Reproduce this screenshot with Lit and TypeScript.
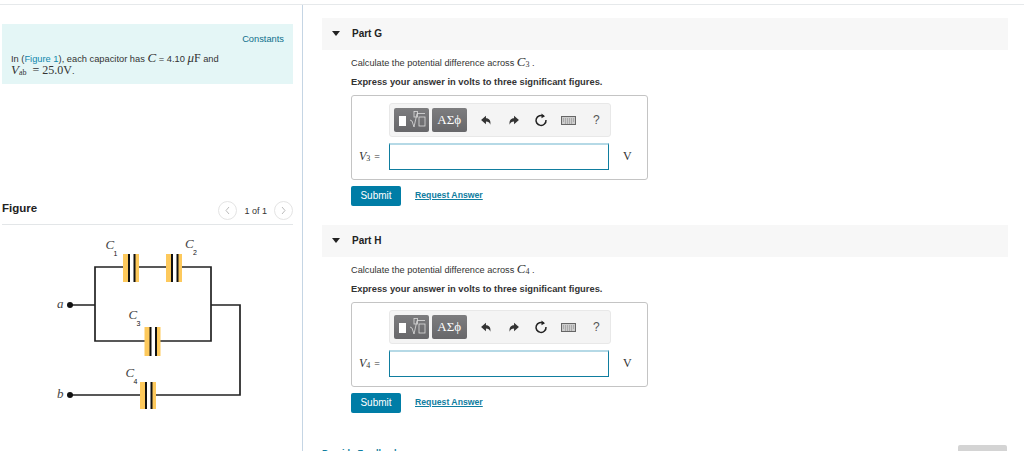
import { LitElement, html, css, svg } from "lit";
import { customElement, property } from "lit/decorators.js";

@customElement("answer-part")
class AnswerPart extends LitElement {
  @property() part = "";
  @property() cap = "";
  @property() volt = "";

  static styles = css`
    :host {
      display: block;
    }
    .head {
      height: 32px;
      box-sizing: border-box;
      padding-bottom: 2px;
      background: #f7f7f7;
      display: flex;
      align-items: center;
      font-weight: bold;
      font-size: 10px;
      color: #222;
    }
    .tri {
      width: 0;
      height: 0;
      margin: 0 12px 0 10px;
      border-left: 4px solid transparent;
      border-right: 4px solid transparent;
      border-top: 5px solid #222;
    }
    .body {
      padding: 0 0 0 29px;
    }
    .prompt {
      height: 14px;
      margin-top: 5px;
      line-height: 14px;
      font-size: 9.2px;
      color: #333;
    }
    .math {
      font-family: "Liberation Serif", serif;
      font-style: italic;
      font-size: 13px;
    }
    .math sub {
      font-style: normal;
      font-size: 8px;
      line-height: 0;
      vertical-align: -1px;
    }
    .express {
      margin-top: 6px;
      height: 14px;
      line-height: 14px;
      font-size: 9.33px;
      font-weight: bold;
      color: #333;
    }
    .box {
      margin-top: 6px;
      width: 297px;
      height: 85px;
      box-sizing: border-box;
      border: 1px solid #c4c4c4;
      border-radius: 3px;
      padding: 7px 0 0 37px;
    }
    .toolbar {
      width: 222px;
      height: 34px;
      box-sizing: border-box;
      background: #f4f4f4;
      border: 1px solid #e8e8e8;
      border-radius: 3px;
      display: flex;
      align-items: center;
      padding-left: 4px;
    }
    .tool {
      width: 35px;
      height: 24px;
      background: linear-gradient(#7d7d7f, #67676a);
      border-radius: 2px;
      display: flex;
      align-items: center;
      justify-content: center;
      margin-right: 3px;
      color: #fff;
    }
    .tool.sym {
      font-family: "Liberation Serif", "DejaVu Serif", serif;
      font-size: 13px;
    }
    .icons {
      display: flex;
      align-items: center;
      margin-left: 3px;
    }
    .icons span {
      width: 27.5px;
      display: flex;
      justify-content: center;
      color: #555;
      font-size: 12px;
    }
    .row {
      display: flex;
      align-items: center;
      margin-top: 6px;
      margin-left: -37px;
    }
    .label {
      width: 37px;
      box-sizing: border-box;
      padding-left: 7px;
      font-family: "Liberation Serif", serif;
      font-size: 10px;
      color: #333;
      white-space: nowrap;
    }
    .label i {
      font-size: 12px;
    }
    .label sub {
      font-size: 8px;
      line-height: 0;
      vertical-align: -1px;
      margin-right: 4px;
    }
    .field {
      width: 220px;
      height: 27px;
      box-sizing: border-box;
      border: 1px solid #0f7d9f;
      border-top: 2px solid #b5d9e6;
      background: #fff;
    }
    .unit {
      margin-left: 14px;
      font-family: "Liberation Serif", serif;
      font-size: 12px;
      color: #333;
    }
    .actions {
      display: flex;
      align-items: center;
      margin-top: 6px;
    }
    .submit {
      width: 50px;
      height: 20px;
      background: #007da6;
      border-radius: 2px;
      color: #fff;
      font-size: 10px;
      line-height: 20px;
      text-align: center;
    }
    .request {
      margin: 0 0 2px 14px;
      font-size: 8.7px;
      font-weight: bold;
      color: #0f7d9f;
      text-decoration: underline;
    }
  `;

  render() {
    return html`
      <div class="head"><span class="tri"></span>Part ${this.part}</div>
      <div class="body">
        <div class="prompt">
          Calculate the potential difference across
          <span class="math">C<sub>${this.cap}</sub></span> .
        </div>
        <div class="express">Express your answer in volts to three significant figures.</div>
        <div class="box">
          <div class="toolbar">
            <div class="tool">
              <svg width="35" height="24" viewBox="0 0 35 24">
                <rect x="5" y="8" width="7" height="10" fill="#fff" />
                <rect x="20" y="3.500" width="3.500" height="5.500" fill="none" stroke="#ddd" stroke-width=".8" />
                <path d="M16 12l2 1 2 6 3-13.500h8" fill="none" stroke="#ddd" stroke-width=".8" />
                <rect x="25" y="9" width="6" height="9" fill="none" stroke="#ddd" stroke-width=".8" />
              </svg>
            </div>
            <div class="tool sym">ΑΣϕ</div>
            <div class="icons">
              <span>
                <svg width="13" height="13" viewBox="0 0 12 12">
                  <path d="M5.500 1.500L1 5.500l4.500 4V7c2 0 3.500.6 4 3 .8-3.600-1-6-4-6z" fill="#333" />
                </svg>
              </span>
              <span>
                <svg width="13" height="13" viewBox="0 0 12 12">
                  <path d="M6.500 1.500l4.500 4-4.500 4V7c-2 0-3.500.6-4 3-.8-3.600 1-6 4-6z" fill="#333" />
                </svg>
              </span>
              <span>
                <svg width="14" height="14" viewBox="0 0 14 14">
                  <path d="M9.700 3.200A5 5 0 1 0 12 7" fill="none" stroke="#222" stroke-width="1.500" />
                  <path d="M7.500 0.500l3.500 2.800-3.500 2z" fill="#222" />
                </svg>
              </span>
              <span>
                <svg width="15" height="9" viewBox="0 0 15 9">
                  <rect x=".5" y=".5" width="14" height="8" fill="#ccc" stroke="#666" />
                  <path d="M2 3h11M2 5h11M4 7h7" stroke="#888" stroke-dasharray="1 1" />
                </svg>
              </span>
              <span>?</span>
            </div>
          </div>
          <div class="row">
            <div class="label"><i>V</i><sub>${this.cap}</sub>=</div>
            <div class="field"></div>
            <div class="unit">${this.volt}</div>
          </div>
        </div>
        <div class="actions">
          <div class="submit">Submit</div>
          <div class="request">Request Answer</div>
        </div>
      </div>
    `;
  }
}

function capacitor(x: number, y0: number, y1: number) {
  return svg`
    <rect x=${x - 6} y=${y0} width="16" height=${y1 - y0} fill="#fdc95c" />
    <rect x=${x} y=${y0} width="5.500" height=${y1 - y0} fill="#fff" />
    <path d="M${x} ${y0}V${y1}M${x + 5.500} ${y0}V${y1}" stroke="#111" stroke-width="2" fill="none" />
  `;
}

function capLabel(x: number, y: number, n: string) {
  return svg`
    <text x=${x} y=${y} class="c">C</text>
    <text x=${x + 8} y=${y + 7} class="n">${n}</text>
  `;
}

@customElement("app-root")
class AppRoot extends LitElement {
  static styles = css`
    :host {
      display: block;
      height: 451px;
      overflow: hidden;
      font-family: "Liberation Sans", Arial, sans-serif;
      position: relative;
    }
    .page {
      margin-top: 4px;
      border-top: 1px solid #e6e9eb;
      display: flex;
      height: 446px;
    }
    .left {
      width: 303px;
      height: 100%;
      box-sizing: border-box;
      border-right: 1px solid #c5d5e4;
      padding: 19px 9px 0 2px;
      flex: none;
    }
    .intro {
      background: #e4f6f6;
      height: 60px;
      box-sizing: border-box;
      padding: 9px 9px 0 9px;
      font-size: 9.3px;
      color: #333;
    }
    .constants {
      text-align: right;
      color: #0f6f8c;
      line-height: 12px;
    }
    .intro p {
      margin: 8px 0 0;
      line-height: 12px;
    }
    .intro a {
      color: #0f87ad;
    }
    .m {
      font-family: "Liberation Serif", serif;
      font-size: 12px;
      line-height: 0;
    }
    .m i {
      font-size: 13px;
    }
    .m sub {
      font-size: 8px;
      line-height: 0;
      vertical-align: -1px;
      margin-right: 3px;
    }
    .figure-head {
      margin-top: 114px;
      height: 27px;
      box-sizing: border-box;
      border-bottom: 1px solid #e3e6e8;
      display: flex;
      justify-content: space-between;
      font-size: 11.500px;
      font-weight: bold;
      color: #222;
    }
    .figure-head > span {
      line-height: 21px;
    }
    .pager {
      display: flex;
      align-items: flex-start;
      font-weight: normal;
      font-size: 9px;
      color: #333;
      line-height: 20px;
      gap: 7px;
      margin-top: 3px;
    }
    .round {
      width: 19px;
      height: 19px;
      box-sizing: border-box;
      border: 1px solid #e4e4e4;
      border-radius: 50%;
      display: flex;
      align-items: center;
      justify-content: center;
    }
    .circuit {
      display: block;
      margin-left: -2px;
    }
    .c {
      font: italic 13px "Liberation Serif", serif;
      fill: #444;
    }
    .n {
      font: 7px "Liberation Sans", sans-serif;
      fill: #111;
    }
    .right {
      flex: 1;
      padding: 13px 16px 0 19px;
    }
    answer-part + answer-part {
      margin-top: 19px;
    }
    .feedback {
      position: absolute;
      left: 322px;
      top: 448px;
      font-size: 9px;
      font-weight: bold;
      color: #0f7d9f;
    }
    .next {
      position: absolute;
      left: 958px;
      top: 445px;
      width: 49px;
      height: 20px;
      background: #d4d4d4;
      border-radius: 2px;
    }
  `;

  renderCircuit() {
    return html`
      <svg class="circuit" width="300" height="220" viewBox="0 225 300 220">
        <g fill="none" stroke="#222" stroke-width="1.700">
          <path d="M95 267H211V341H95ZM70 305H95M211 305H240V395H70" />
        </g>
        <circle cx="70" cy="305" r="3" fill="#111" />
        <circle cx="70" cy="395" r="3" fill="#111" />
        ${capacitor(129, 254, 282)} ${capacitor(172, 254, 282)}
        ${capacitor(150.500, 327, 356)} ${capacitor(146, 382, 409)}
        ${capLabel(105.500, 249, "1")} ${capLabel(185, 248, "2")}
        ${capLabel(128.500, 319, "3")} ${capLabel(125.500, 377, "4")}
        <text x="57" y="308" class="c">a</text>
        <text x="57" y="398" class="c">b</text>
      </svg>
    `;
  }

  render() {
    return html`
      <div class="page">
        <div class="left">
          <div class="intro">
            <div class="constants">Constants</div>
            <p>
              In (<a>Figure 1</a>), each capacitor has <span class="m"><i>C</i></span> = 4.10
              <span class="m"><i>μ</i>F</span> and<br />
              <span class="m"><i>V</i><sub>ab</sub> = 25.0V</span>.
            </p>
          </div>
          <div class="figure-head">
            <span>Figure</span>
            <div class="pager">
              <div class="round">
                <svg width="7" height="9" viewBox="0 0 7 9"><path d="M5 1L2 4.500 5 8" fill="none" stroke="#bbb" /></svg>
              </div>
              <span>1 of 1</span>
              <div class="round">
                <svg width="7" height="9" viewBox="0 0 7 9"><path d="M2 1l3 3.500L2 8" fill="none" stroke="#bbb" /></svg>
              </div>
            </div>
          </div>
          ${this.renderCircuit()}
        </div>
        <div class="right">
          <answer-part part="G" cap="3" volt="V"></answer-part>
          <answer-part part="H" cap="4" volt="V"></answer-part>
        </div>
      </div>
      <div class="feedback">Provide Feedback</div>
      <div class="next"></div>
    `;
  }
}
